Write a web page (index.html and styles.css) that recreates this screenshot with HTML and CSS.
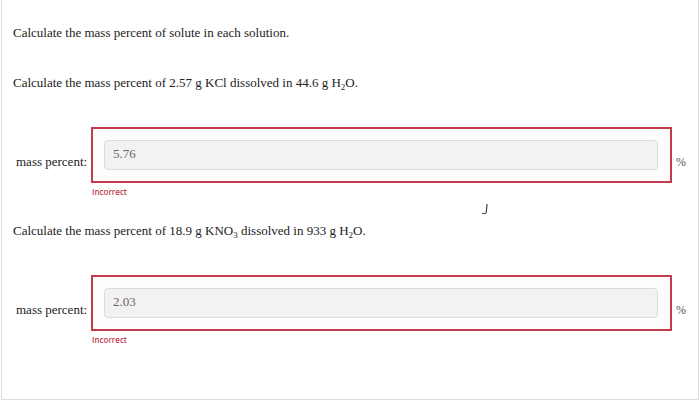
FILE: index.html
```html
<!DOCTYPE html>
<html>
<head>
<meta charset="utf-8">
<link rel="stylesheet" href="styles.css">
</head>
<body>
<div class="page">
  <p class="line intro">Calculate the mass percent of solute in each solution.</p>
  <p class="line q1">Calculate the mass percent of 2.57 g KCl dissolved in 44.6 g H<sub>2</sub>O.</p>
  <div class="answer-row">
    <span class="label">mass percent:</span>
    <div class="answer-box">
      <div class="input">5.76</div>
    </div>
    <span class="unit">%</span>
  </div>
  <div class="feedback">Incorrect</div>
  <svg class="cursor-mark" width="10" height="12" viewBox="0 0 10 12"><path d="M7 1 L6.3 9 Q6.2 10.5 4.8 10.5 L2 10.5" fill="none" stroke="#444" stroke-width="1.2"/></svg>
  <p class="line q2">Calculate the mass percent of 18.9 g KNO<sub>3</sub> dissolved in 933 g H<sub>2</sub>O.</p>
  <div class="answer-row">
    <span class="label">mass percent:</span>
    <div class="answer-box">
      <div class="input">2.03</div>
    </div>
    <span class="unit">%</span>
  </div>
  <div class="feedback">Incorrect</div>
</div>
</body>
</html>
```
FILE: styles.css
```css
html, body {
  margin: 0;
  padding: 0;
  background: #ffffff;
}
.page {
  position: relative;
  box-sizing: border-box;
  width: 698px;
  height: 400px;
  margin-left: 1px;
  border: 1px solid #dedede;
  border-top: none;
  padding-top: 25px;
  font-family: "Liberation Serif", "Times New Roman", serif;
  color: #222;
}
.line {
  margin: 0;
  padding-left: 11px;
  font-size: 13px;
  line-height: 16px;
}
.line sub {
  font-size: 9px;
  line-height: 0;
  vertical-align: -3px;
}
.q1 { margin-top: 34px; }
.q2 { margin-top: 26px; }
.answer-row {
  display: flex;
  align-items: center;
  margin-top: 36px;
}
.label {
  box-sizing: border-box;
  width: 89px;
  padding-left: 14px;
  padding-top: 14px;
  font-size: 13px;
  line-height: 16px;
}
.answer-box {
  box-sizing: border-box;
  width: 581px;
  height: 56px;
  border: 2px solid #c23b4e;
  background: #fffcfc;
  padding: 11px 12px 11px 11px;
}
.input {
  box-sizing: border-box;
  height: 30px;
  border: 1px solid #dcdcdc;
  border-radius: 4px;
  background: #f2f2f2;
  color: #666;
  font-size: 13px;
  line-height: 16px;
  padding: 5px 0 0 8px;
}
.unit {
  padding-left: 4px;
  padding-top: 14px;
  font-size: 12px;
  line-height: 16px;
  color: #555;
}
.feedback {
  margin-top: 4px;
  padding-left: 90px;
  font-family: "Open Sans", "Liberation Sans", sans-serif;
  font-size: 8px;
  font-weight: 600;
  line-height: 10px;
  color: #c23b4e;
}
.cursor-mark {
  position: absolute;
  left: 478px;
  top: 203px;
}
```
